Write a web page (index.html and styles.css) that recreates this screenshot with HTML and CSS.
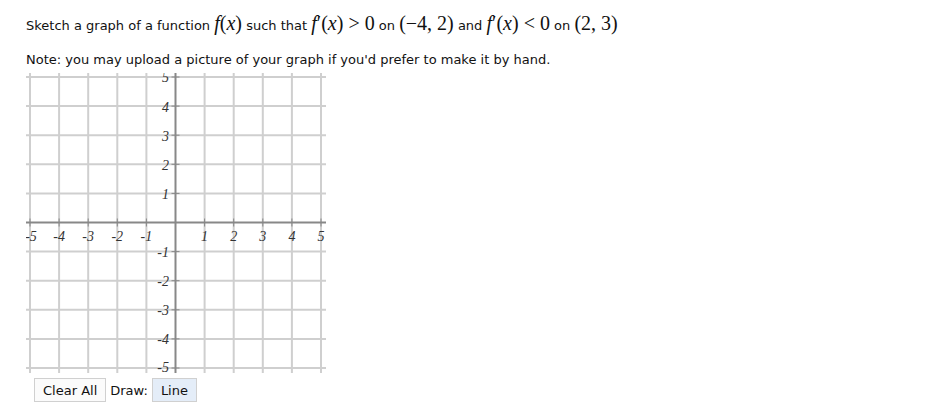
FILE: index.html
```html
<!DOCTYPE html>
<html>
<head>
<meta charset="utf-8">
<link rel="stylesheet" href="styles.css">
</head>
<body>
<div class="page">
  <p class="q">Sketch a graph of a function <span class="m"><i>f</i>(<i>x</i>)</span> such that <span class="m"><i>f</i>′(<i>x</i>) &gt; 0</span> on <span class="m">(−4, 2)</span> and <span class="m"><i>f</i>′(<i>x</i>) &lt; 0</span> on <span class="m">(2, 3)</span></p>
  <p class="note">Note: you may upload a picture of your graph if you'd prefer to make it by hand.</p>
  <svg class="graph" width="300" height="300" viewBox="0 0 300 300">
    <g class="grid">
      <line x1="4" y1="0" x2="4" y2="300"/>
      <line x1="33.1" y1="0" x2="33.1" y2="300"/>
      <line x1="62.2" y1="0" x2="62.2" y2="300"/>
      <line x1="91.3" y1="0" x2="91.3" y2="300"/>
      <line x1="120.4" y1="0" x2="120.4" y2="300"/>
      <line x1="178.6" y1="0" x2="178.6" y2="300"/>
      <line x1="207.7" y1="0" x2="207.7" y2="300"/>
      <line x1="236.8" y1="0" x2="236.8" y2="300"/>
      <line x1="265.9" y1="0" x2="265.9" y2="300"/>
      <line x1="295" y1="0" x2="295" y2="300"/>
      <line y1="4" x1="0" y2="4" x2="300"/>
      <line y1="33.1" x1="0" y2="33.1" x2="300"/>
      <line y1="62.2" x1="0" y2="62.2" x2="300"/>
      <line y1="91.3" x1="0" y2="91.3" x2="300"/>
      <line y1="120.4" x1="0" y2="120.4" x2="300"/>
      <line y1="178.6" x1="0" y2="178.6" x2="300"/>
      <line y1="207.7" x1="0" y2="207.7" x2="300"/>
      <line y1="236.8" x1="0" y2="236.8" x2="300"/>
      <line y1="265.9" x1="0" y2="265.9" x2="300"/>
      <line y1="295" x1="0" y2="295" x2="300"/>
    </g>
    <g class="axis">
      <line x1="149.5" y1="0" x2="149.5" y2="300"/>
      <line y1="149.5" x1="0" y2="149.5" x2="300"/>
    </g>
    <g class="ticks">
      <line x1="4" y1="145.5" x2="4" y2="153.5"/>
      <line x1="33.1" y1="145.5" x2="33.1" y2="153.5"/>
      <line x1="62.2" y1="145.5" x2="62.2" y2="153.5"/>
      <line x1="91.3" y1="145.5" x2="91.3" y2="153.5"/>
      <line x1="120.4" y1="145.5" x2="120.4" y2="153.5"/>
      <line x1="178.6" y1="145.5" x2="178.6" y2="153.5"/>
      <line x1="207.7" y1="145.5" x2="207.7" y2="153.5"/>
      <line x1="236.8" y1="145.5" x2="236.8" y2="153.5"/>
      <line x1="265.9" y1="145.5" x2="265.9" y2="153.5"/>
      <line x1="295" y1="145.5" x2="295" y2="153.5"/>
      <line y1="4" x1="145.5" y2="4" x2="153.5"/>
      <line y1="33.1" x1="145.5" y2="33.1" x2="153.5"/>
      <line y1="62.2" x1="145.5" y2="62.2" x2="153.5"/>
      <line y1="91.3" x1="145.5" y2="91.3" x2="153.5"/>
      <line y1="120.4" x1="145.5" y2="120.4" x2="153.5"/>
      <line y1="178.6" x1="145.5" y2="178.6" x2="153.5"/>
      <line y1="207.7" x1="145.5" y2="207.7" x2="153.5"/>
      <line y1="236.8" x1="145.5" y2="236.8" x2="153.5"/>
      <line y1="265.9" x1="145.5" y2="265.9" x2="153.5"/>
      <line y1="295" x1="145.5" y2="295" x2="153.5"/>
    </g>
    <g class="xl">
      <text x="5" y="168">-5</text>
      <text x="33.1" y="168">-4</text>
      <text x="62.2" y="168">-3</text>
      <text x="91.3" y="168">-2</text>
      <text x="120.4" y="168">-1</text>
      <text x="178.6" y="168">1</text>
      <text x="207.7" y="168">2</text>
      <text x="236.8" y="168">3</text>
      <text x="265.9" y="168">4</text>
      <text x="295" y="168">5</text>
    </g>
    <g class="yl">
      <text x="143" y="9">5</text>
      <text x="143" y="38.6">4</text>
      <text x="143" y="67.7">3</text>
      <text x="143" y="96.8">2</text>
      <text x="143" y="125.9">1</text>
      <text x="143" y="184.1">-1</text>
      <text x="143" y="213.2">-2</text>
      <text x="143" y="242.3">-3</text>
      <text x="143" y="271.4">-4</text>
      <text x="143" y="299">-5</text>
    </g>
  </svg>
  <div class="controls">
    <button class="btn">Clear All</button>
    <span class="lbl">Draw:</span>
    <button class="btn active">Line</button>
  </div>
</div>
</body>
</html>
```
FILE: styles.css
```css
html, body {
  margin: 0;
  padding: 0;
  background: #fff;
}
.page {
  padding: 13px 0 0 26px;
  font-family: "DejaVu Sans", sans-serif;
  font-size: 13px;
  color: #111;
}
.q {
  margin: 0;
  line-height: 20px;
  height: 20px;
}
.m {
  font-family: "Liberation Serif", serif;
  font-size: 20px;
}
.note {
  margin: 17px 0 0 0;
  line-height: 20px;
}
.graph {
  display: block;
  margin-top: 3px;
}
.grid line {
  stroke: #cfcfcf;
  stroke-width: 2;
}
.axis line {
  stroke: #888;
  stroke-width: 2;
}
.ticks line {
  stroke: #888;
  stroke-width: 1;
}
.xl text, .yl text {
  font-family: "Liberation Serif", serif;
  font-style: italic;
  font-size: 14px;
  fill: #333;
}
.xl text {
  text-anchor: middle;
}
.yl text {
  text-anchor: end;
}
.controls {
  display: flex;
  align-items: center;
  gap: 4px;
  margin: 5px 0 0 8px;
}
.btn {
  font-family: inherit;
  font-size: 13px;
  color: #111;
  height: 24px;
  padding: 0 8px;
  background: #fbfbfb;
  border: 1px solid #d0d0d0;
  border-radius: 0;
}
.btn.active {
  background: #e4edf8;
  padding: 0 8px;
}
.lbl {
  color: #111;
}
```
